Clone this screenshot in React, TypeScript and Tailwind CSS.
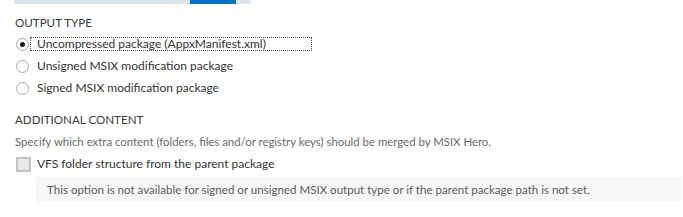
import React from 'react';

const Radio: React.FC<{ checked?: boolean; label: string; focused?: boolean }> = ({ checked, label, focused }) => (
  <div className="flex items-center h-[22px] pl-[16px]">
    <span className="w-[13px] h-[13px] rounded-full border border-[#a8a8a8] bg-white flex items-center justify-center shrink-0">
      {checked && <span className="w-[5px] h-[5px] rounded-full bg-[#1a1a1a]" />}
    </span>
    {focused ? (
      <span className="ml-[1px] h-[14px] w-[282px] border border-dotted border-[#444] flex items-center pl-[6px]">
        {label}
      </span>
    ) : (
      <span className="ml-[8px]">{label}</span>
    )}
  </div>
);

const App: React.FC = () => {
  return (
    <div className="w-[683px] h-[217px] bg-white overflow-hidden text-[12px] text-[#333] flex flex-col"
         style={{ fontFamily: 'Lato, "Liberation Sans", sans-serif' }}>
      <div className="ml-[14px] w-[237px] h-[4px] flex shrink-0">
        <div className="w-[176px] bg-[#dfe5ee]" />
        <div className="w-[46px] bg-[#0072c6]" />
        <div className="flex-1 bg-[#dfe5ee]" />
      </div>

      <div className="mt-[9px] h-[20px] flex items-center pl-[15px] text-[11.6px] text-[#3a3a3a]">OUTPUT TYPE</div>
      <Radio checked focused label="Uncompressed package (AppxManifest.xml)" />
      <Radio label="Unsigned MSIX modification package" />
      <Radio label="Signed MSIX modification package" />

      <div className="mt-[11px] h-[20px] flex items-center pl-[15px] text-[11.6px] text-[#3a3a3a]">ADDITIONAL CONTENT</div>
      <div className="mt-[1px] h-[22px] flex items-center pl-[15px] text-[11.4px] text-[#6a6a6a]">
        Specify which extra content (folders, files and/or registry keys) should be merged by MSIX Hero.
      </div>
      <div className="h-[22px] flex items-center pl-[16px]">
        <span className="w-[15px] h-[15px] border-2 border-[#c2c2c2] bg-[#e8e8e8] shrink-0" />
        <span className="ml-[6px]">VFS folder structure from the parent package</span>
      </div>
      <div className="mt-[2px] ml-[36px] mr-[2px] h-[25px] bg-[#f7f7f7] flex items-center pl-[11px] text-[11.55px] text-[#5a5a5a]">
        This option is not available for signed or unsigned MSIX output type or if the parent package path is not set.
      </div>
    </div>
  );
};

export default App;
